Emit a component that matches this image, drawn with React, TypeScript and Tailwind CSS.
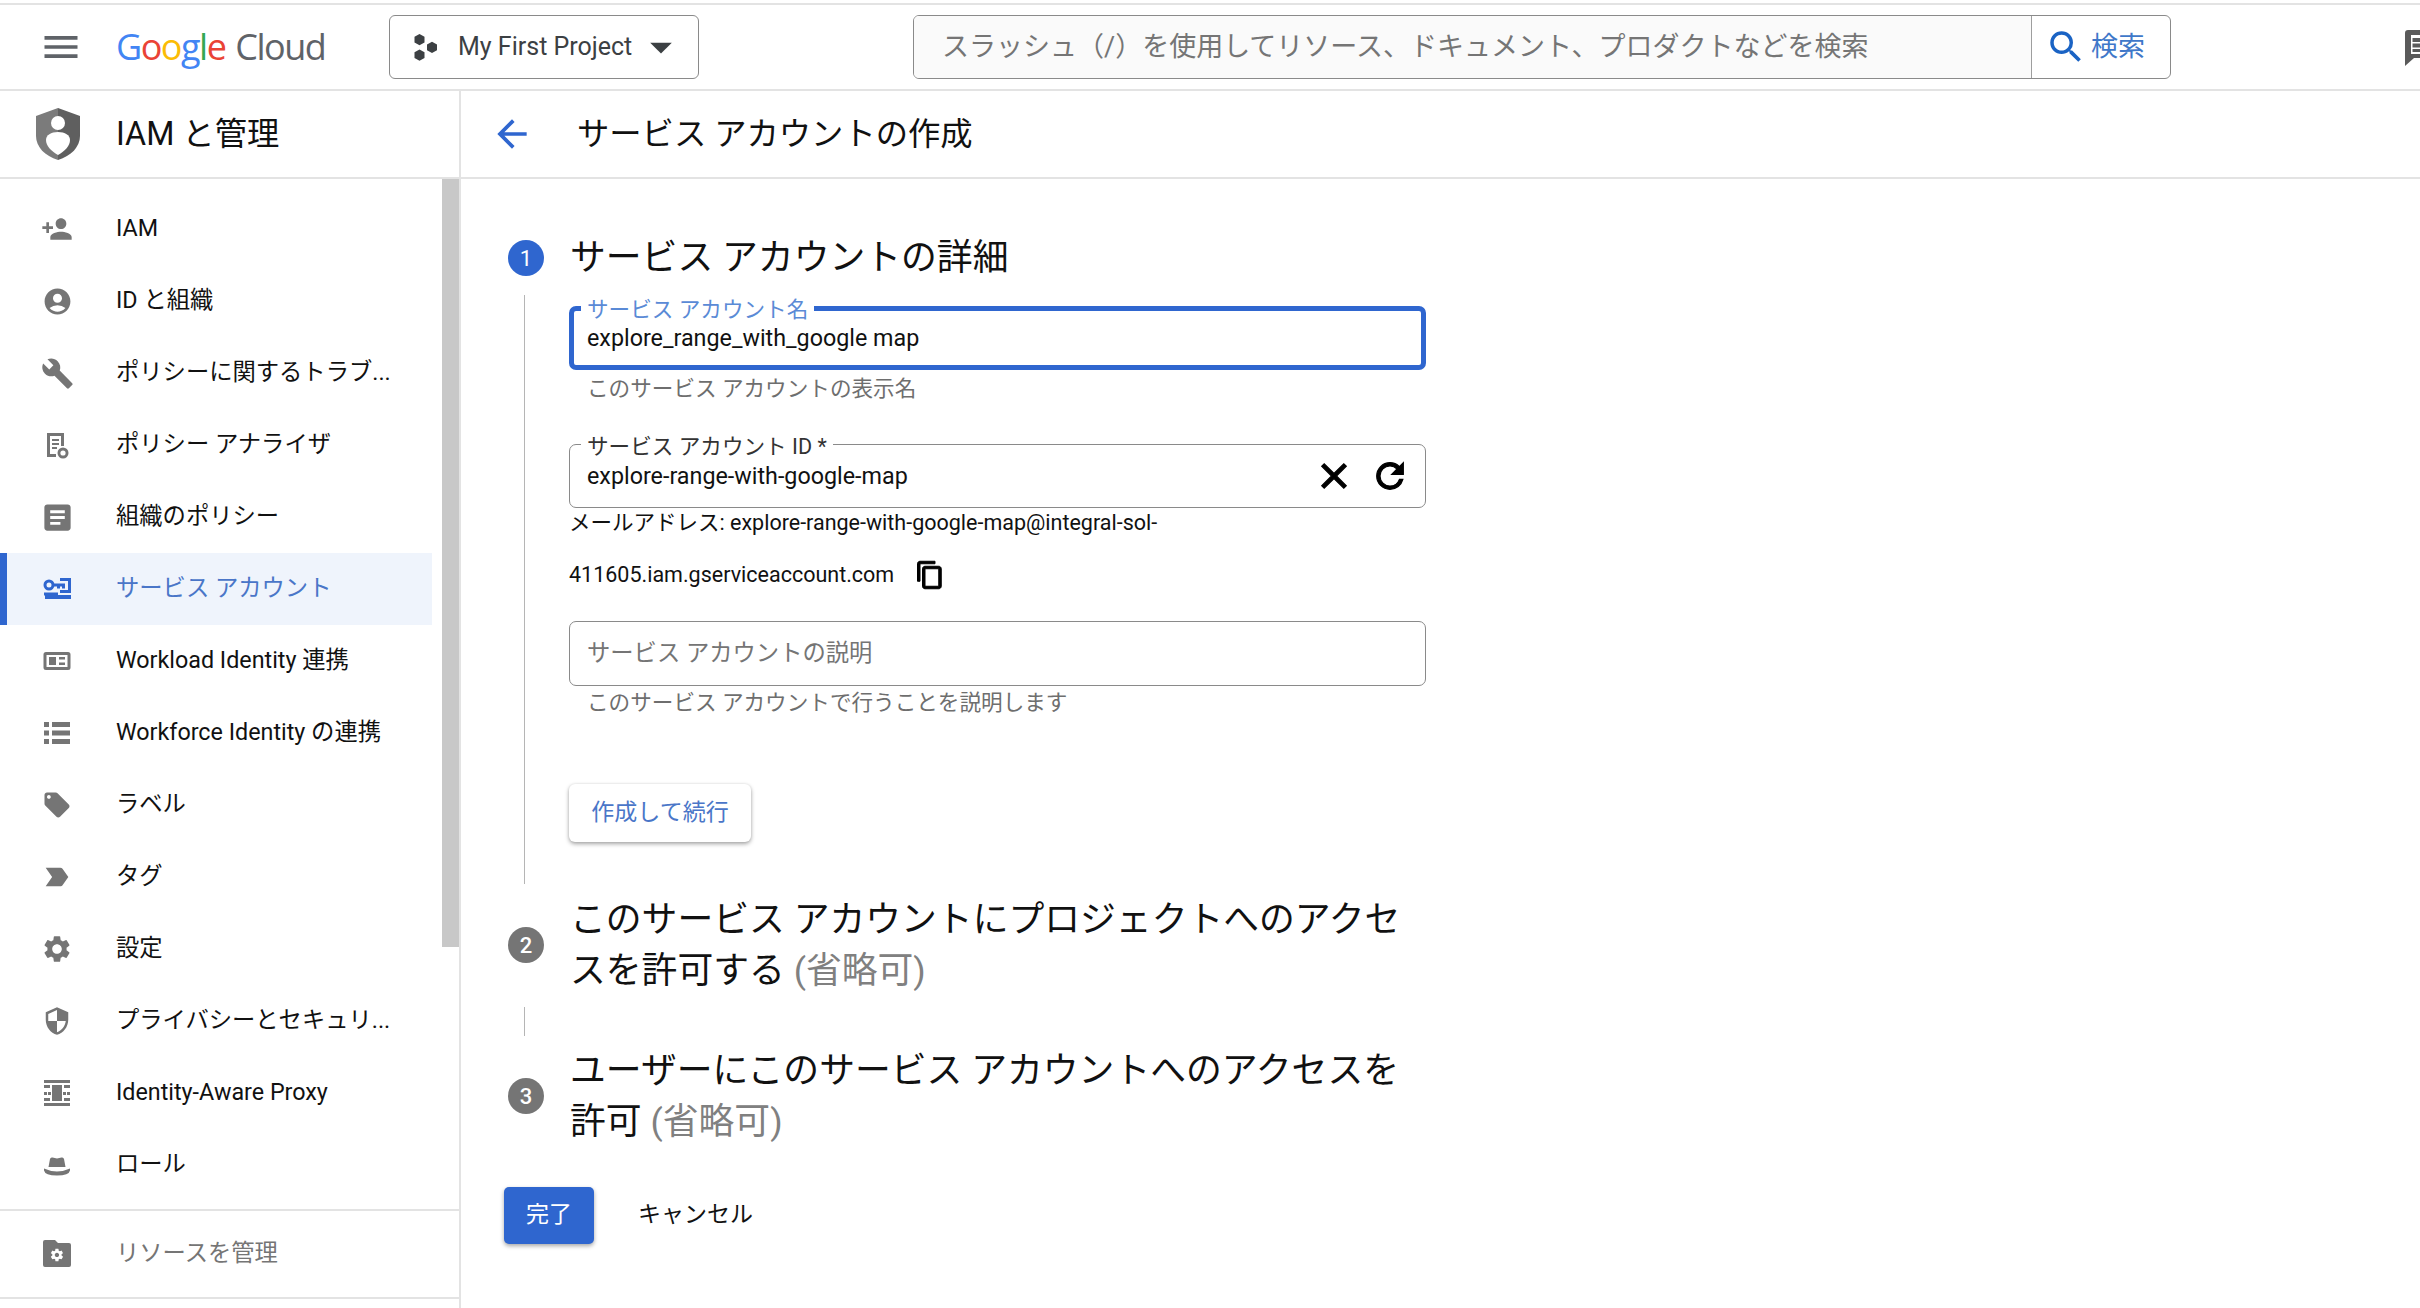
import React from 'react';
import {
  MdMenu, MdArrowDropDown, MdSearch, MdArrowBack, MdPersonAdd, MdAccountCircle, MdBuild, MdArticle,
  MdLocalOffer, MdLabelImportant, MdSettings, MdSecurity,
} from 'react-icons/md';

const font = 'font-["Roboto","Noto_Sans_CJK_JP",sans-serif]';

const PolicyIcon = () => (
  <svg viewBox="0 0 36 36" className="w-[36px] h-[36px]">
    <path d="M8 6h17v13h-3v-10h-11v18h6v3h-9z" fill="#757575" />
    <path d="M13 12h7v2h-7zM13 16h7v2h-7zM13 20h5v2h-5z" fill="#757575" />
    <circle cx="24" cy="26" r="5.500" fill="#757575" />
    <circle cx="24" cy="26" r="2.600" fill="#fff" />
  </svg>
);

const KeyIcon = () => (
  <svg viewBox="0 0 36 36" className="w-[36px] h-[36px]">
    <g transform="translate(0 2)">
      <path d="M21 5h11v15h-11v-3h8v-9h-8z" fill="#2f66cf" />
      <circle cx="10" cy="12" r="4" fill="none" stroke="#2f66cf" strokeWidth="3" />
      <path d="M14 10.500h12v5h-3v-2h-2v2h-3v-2h-4z" fill="#2f66cf" />
      <path d="M6 22h26v4h-26z" fill="#2f66cf" />
      <path d="M5 19.500h14v3h-14z" fill="#2f66cf" />
    </g>
  </svg>
);

const CardIcon = () => (
  <svg viewBox="0 0 36 36" className="w-[36px] h-[36px]">
    <path fillRule="evenodd" d="M7 9h22a2.500 2.500 0 0 1 2.500 2.500v13a2.500 2.500 0 0 1-2.500 2.500h-22a2.500 2.500 0 0 1-2.500-2.500v-13a2.500 2.500 0 0 1 2.500-2.500zM7.500 12v12h21v-12z" fill="#757575" />
    <path d="M10 14h7v8h-7zM20 14h6v2.500h-6zM20 19.500h6v2.500h-6z" fill="#757575" />
  </svg>
);

const ListIcon = () => (
  <svg viewBox="0 0 36 36" className="w-[36px] h-[36px]">
    <path d="M5 7h5v5h-5zM13 7h18v5h-18zM5 15.500h5v5h-5zM13 15.500h18v5h-18zM5 24h5v5h-5zM13 24h18v5h-18z" fill="#757575" />
  </svg>
);

const ProxyIcon = () => (
  <svg viewBox="0 0 36 36" className="w-[36px] h-[36px]">
    <path d="M5 5h26v3h-26zM5 28h26v3h-26zM13 10h10v16h-10z" fill="#757575" />
    <path d="M5 10h6v3h-6zM25 10h6v3h-6zM5 17h3v3h-3zM9 17h3v3h-3zM24 17h3v3h-3zM28 17h3v3h-3zM5 23h6v3h-6zM25 23h6v3h-6z" fill="#757575" />
  </svg>
);

const HatIcon = () => (
  <svg viewBox="0 0 36 36" className="w-[36px] h-[36px]">
    <path d="M9.500 20l1.500-8q.500-2 2.500-1.500l4.500 1 4.500-1q2-.500 2.500 1.500l1.500 8z" fill="#757575" />
    <path d="M5 21.500q13 6 26 0v2q-1 5-13 5t-13-5z" fill="#757575" />
  </svg>
);

const FolderGearIcon = () => (
  <svg viewBox="0 0 36 36" className="w-[36px] h-[36px]">
    <path d="M6 4h10l3 3h11a2 2 0 0 1 2 2v20a2 2 0 0 1-2 2h-24a2 2 0 0 1-2-2v-23a2 2 0 0 1 2-2z" fill="#757575" />
    <g transform="translate(10.500 11.500) scale(0.62)">
      <path d="M19.430 12.980c.040-.320.070-.640.070-.980s-.030-.660-.070-.980l2.110-1.650c.190-.150.240-.420.120-.640l-2-3.460c-.120-.220-.390-.300-.610-.220l-2.490 1c-.520-.400-1.080-.730-1.690-.980l-.380-2.650A.488.488 0 0 0 14 2h-4c-.250 0-.460.180-.490.420l-.380 2.650c-.610.250-1.170.590-1.690.980l-2.490-1c-.230-.090-.490 0-.610.220l-2 3.460c-.130.220-.070.490.120.640l2.110 1.650c-.040.320-.070.650-.070.980s.030.660.070.980l-2.110 1.650c-.190.150-.240.420-.120.640l2 3.460c.120.220.390.300.610.220l2.490-1c.520.400 1.080.730 1.690.980l.380 2.650c.030.240.240.420.490.420h4c.250 0 .460-.180.490-.420l.380-2.650c.610-.250 1.170-.590 1.690-.980l2.490 1c.230.090.490 0 .610-.220l2-3.460c.120-.220.070-.490-.120-.640l-2.110-1.650zM12 15.500c-1.930 0-3.500-1.570-3.500-3.500s1.570-3.500 3.500-3.500 3.500 1.570 3.500 3.500-1.570 3.500-3.500 3.500z" fill="#fff" />
    </g>
  </svg>
);

const CloseIcon = () => (
  <svg viewBox="0 0 24 24" className="w-[42px] h-[42px] ml-auto shrink-0">
    <path d="M19 6.410L17.590 5 12 10.590 6.410 5 5 6.410 10.590 12 5 17.590 6.410 19 12 13.410 17.590 19 19 17.590 13.410 12z" fill="#000" stroke="#000" strokeWidth="0.7" />
  </svg>
);

const RefreshIcon = () => (
  <svg viewBox="0 0 24 24" className="w-[40px] h-[40px] ml-[15px] mr-[15px] shrink-0">
    <path d="M17.650 6.350C16.200 4.900 14.210 4 12 4c-4.420 0-7.990 3.580-7.990 8s3.570 8 7.990 8c3.730 0 6.840-2.550 7.730-6h-2.080c-.820 2.330-3.040 4-5.650 4-3.310 0-6-2.690-6-6s2.690-6 6-6c1.660 0 3.140.690 4.220 1.780L13 11h7V4l-2.350 2.350z" fill="#000" stroke="#000" strokeWidth="0.7" />
  </svg>
);

const CopyIcon = () => (
  <svg viewBox="0 0 24 24" className="w-[30px] h-[30px] ml-[21px] shrink-0">
    <path d="M16 1H4c-1.100 0-2 .900-2 2v14h2V3h12V1zm3 4H8c-1.100 0-2 .900-2 2v14c0 1.100.900 2 2 2h11c1.100 0 2-.900 2-2V7c0-1.100-.900-2-2-2zm0 16H8V7h11v14z" fill="#000" stroke="#000" strokeWidth="0.8" />
  </svg>
);

const navItems: { label: string; icon: React.ReactNode; active?: boolean }[] = [
  { label: 'IAM', icon: <MdPersonAdd size={32} /> },
  { label: 'ID と組織', icon: <MdAccountCircle size={31} /> },
  { label: 'ポリシーに関するトラブ...', icon: <MdBuild size={33} /> },
  { label: 'ポリシー アナライザ', icon: <PolicyIcon /> },
  { label: '組織のポリシー', icon: <MdArticle size={35} /> },
  { label: 'サービス アカウント', icon: <KeyIcon />, active: true },
  { label: 'Workload Identity 連携', icon: <CardIcon /> },
  { label: 'Workforce Identity の連携', icon: <ListIcon /> },
  { label: 'ラベル', icon: <MdLocalOffer size={30} /> },
  { label: 'タグ', icon: <MdLabelImportant size={32} /> },
  { label: '設定', icon: <MdSettings size={32} /> },
  { label: 'プライバシーとセキュリ...', icon: <MdSecurity size={30} /> },
  { label: 'Identity-Aware Proxy', icon: <ProxyIcon /> },
  { label: 'ロール', icon: <HatIcon /> },
];

const StepTitle = ({ n, children }: { n: number; children: React.ReactNode }) => (
  <div className="flex items-center">
    <div className="w-[36px] h-[36px] rounded-full bg-[#757575] text-white text-[22px] font-medium flex items-center justify-center shrink-0">{n}</div>
    <div className="ml-[26px] pt-[2px] text-[35.800px] leading-[51px] text-[#111]">{children}</div>
  </div>
);

export default function App() {
  return (
    <div className={`${font} w-[2420px] h-[1308px] bg-white overflow-hidden flex flex-col text-[#111]`}>
      <div className="h-[5px] border-b-2 border-[#e3e3e3] shrink-0" />

      {/* Top bar */}
      <div className="h-[86px] shrink-0 border-b-2 border-[#e3e3e3] flex items-center pl-[39px]">
        <MdMenu size={44} className="text-[#5f6368] shrink-0" />
        <div className='ml-[33px] w-[208px] shrink-0 font-["Open_Sans",sans-serif] text-[36px] tracking-[-1.5px] whitespace-nowrap'>
          <span className="text-[#4285f4]">G</span>
          <span className="text-[#ea4335]">o</span>
          <span className="text-[#fbbc05]">o</span>
          <span className="text-[#4285f4]">g</span>
          <span className="text-[#34a853]">l</span>
          <span className="text-[#ea4335]">e</span>
          <span className="text-[#5f6368] ml-[10px]">Cloud</span>
        </div>
        <div className="ml-[65px] w-[310px] h-[64px] shrink-0 border-[1.500px] border-[#8a8a8a] rounded-[6px] flex items-center pl-[24px]">
          <svg viewBox="0 0 24 27" className="w-[24px] h-[27px] shrink-0">
            <path d="M5.500 0l5 2.800v5.700l-5 2.800-5-2.800v-5.700zM5.500 15.500l5 2.800v5.700l-5 2.800-5-2.800v-5.700zM18 7.800l5 2.800v5.700l-5 2.800-5-2.800v-5.700z" fill="#3c4043" />
          </svg>
          <span className="ml-[20px] text-[25px] text-[#3c4043] whitespace-nowrap">My First Project</span>
          <MdArrowDropDown size={52} className="text-[#3c4043] ml-[3px] shrink-0" />
        </div>
        <div className="ml-[214px] w-[1258px] h-[64px] shrink-0 border-[1.500px] border-[#8a8a8a] rounded-[6px] flex items-center bg-white overflow-hidden">
          <div className="w-[1118px] h-full flex items-center pl-[28px] text-[27px] text-[#757575] bg-[#fafafa] border-r-[1.500px] border-[#9e9e9e] whitespace-nowrap">スラッシュ（/）を使用してリソース、ドキュメント、プロダクトなどを検索</div>
          <div className="flex-1 flex items-center pl-[13px]">
            <MdSearch size={42} className="text-[#1a63c4] shrink-0" />
            <span className="text-[27px] ml-[4px] text-[#3f78c9]">検索</span>
          </div>
        </div>
        <svg viewBox="0 0 36 36" className="ml-[234px] w-[36px] h-[36px] shrink-0 mt-[2px]">
          <path d="M3 0h33v28h-27l-9 8v-33a3 3 0 0 1 3-3z" fill="#5a5a5a" />
          <path d="M6 5h30v19h-30z" fill="#fff" />
          <path d="M7.500 8h28.500v4h-28.500zM7.500 13.500h28.500v4h-28.500zM7.500 19h28.500v3h-28.500z" fill="#5a5a5a" />
        </svg>
      </div>

      <div className="flex flex-1 min-h-0">
        {/* Sidebar */}
        <aside className="w-[461px] shrink-0 border-r-2 border-[#e3e3e3] flex flex-col">
          <div className="h-[88px] shrink-0 border-b-2 border-[#e3e3e3] flex items-center pl-[36px]">
            <svg viewBox="0 0 44 52" className="w-[44px] h-[52px] shrink-0">
              <path d="M22 0l22 8v20c0 11-9 20-22 24z" fill="#5f5f5f" />
              <path d="M22 0l-22 8v20c0 11 9 20 22 24z" fill="#7b7b7b" />
              <circle cx="22" cy="15" r="7" fill="#fff" />
              <path d="M22 24c7 0 12 3 12 8 0 6-5 11-12 15-7-4-12-9-12-15 0-5 5-8 12-8z" fill="#fff" />
            </svg>
            <span className="ml-[36px] text-[32.300px]">IAM と管理</span>
          </div>
          <div className="flex-1 min-h-0 flex">
            <nav className="w-[442px] shrink-0 pt-[14px] flex flex-col">
              {navItems.map((item) => (
                <div
                  key={item.label}
                  className={`w-[432px] h-[72px] shrink-0 flex items-center pl-[39px] ${item.active ? 'bg-[#eff4fc] relative' : ''}`}
                >
                  {item.active && <div className="absolute left-0 top-0 bottom-0 w-[7px] bg-[#2f66cf]" />}
                  <span className={`w-[36px] h-[36px] shrink-0 flex items-center justify-center ${item.active ? 'text-[#2f66cf]' : 'text-[#757575]'}`}>{item.icon}</span>
                  <span className={`ml-[41px] pb-[1px] text-[23.300px] whitespace-nowrap ${item.active ? 'text-[#4a76c8]' : 'text-[#111]'}`}>{item.label}</span>
                </div>
              ))}
            </nav>
            <div className="w-[17px] h-[768px] bg-[#c8c8c8] shrink-0" />
          </div>
          <div className="h-[90px] shrink-0 border-y-2 border-[#e3e3e3] flex items-center pl-[39px] mb-[9px]">
            <FolderGearIcon />
            <span className="ml-[41px] pb-[2px] text-[23.300px] text-[#757575]">リソースを管理</span>
          </div>
        </aside>

        {/* Main */}
        <main className="flex-1 min-w-0 flex flex-col">
          <div className="h-[88px] shrink-0 border-b-2 border-[#e3e3e3] flex items-center pl-[29px]">
            <MdArrowBack size={44} className="text-[#2f66cf] shrink-0" />
            <span className="ml-[43px] text-[32.300px] whitespace-nowrap">サービス アカウントの作成</span>
          </div>

          <div className="pl-[47px] pt-[57px]">
            {/* Step 1 */}
            <div className="flex items-center h-[44px]">
              <div className="w-[36px] h-[36px] rounded-full bg-[#2f66cf] text-white text-[22px] flex items-center justify-center shrink-0">1</div>
              <div className="ml-[26px] pt-[2px] text-[35.800px] whitespace-nowrap">サービス アカウントの詳細</div>
            </div>
            <div className="ml-[16px] mt-[15px] border-l-[1.500px] border-[#b5b5b5] pl-[44px] pt-[11px] h-[589px] w-[902px]">
              <div className="relative h-[64px] border-[5px] border-[#2f66cf] rounded-[7px] flex items-center pl-[13px]">
                <span className="absolute left-[7px] top-[-13px] bg-white px-[6px] text-[21.600px] leading-[24px] text-[#5a8ad6] whitespace-nowrap">サービス アカウント名</span>
                <span className="text-[23.300px] whitespace-nowrap">explore_range_with_google map</span>
              </div>
              <div className="mt-[4px] h-[30px] pl-[18px] text-[21.600px] leading-[30px] text-[#6e6e6e] whitespace-nowrap">このサービス アカウントの表示名</div>

              <div className="relative mt-[40px] h-[64px] border-[1.500px] border-[#8a8a8a] rounded-[7px] flex items-center pl-[17px]">
                <span className="absolute left-[11px] top-[-10px] bg-white px-[6px] text-[21.600px] leading-[24px] text-[#333] whitespace-nowrap">サービス アカウント ID *</span>
                <span className="text-[23.300px] whitespace-nowrap">explore-range-with-google-map</span>
                <CloseIcon />
                <RefreshIcon />
              </div>
              <div className="h-[30px] text-[21.500px] leading-[30px] whitespace-nowrap">メールアドレス: explore-range-with-google-map@integral-sol-</div>
              <div className="mt-[22px] h-[30px] flex items-center text-[21.500px] whitespace-nowrap">
                <span>411605.iam.gserviceaccount.com</span>
                <CopyIcon />
              </div>

              <div className="mt-[31px] h-[65px] border-[1.500px] border-[#8a8a8a] rounded-[7px] flex items-center pl-[17px] text-[23.300px] text-[#757575] whitespace-nowrap">サービス アカウントの説明</div>
              <div className="mt-[2px] h-[30px] pl-[18px] text-[21.600px] leading-[30px] text-[#6e6e6e] whitespace-nowrap">このサービス アカウントで行うことを説明します</div>

              <div className="mt-[66px] w-[182px] h-[58px] rounded-[6px] bg-white shadow-[0_2px_4px_rgba(0,0,0,0.35),0_0_3px_rgba(0,0,0,0.08)] flex items-center justify-center text-[23px] text-[#4a76c8]">作成して続行</div>
            </div>

            {/* Step 2 */}
            <div className="mt-[9px]">
              <StepTitle n={2}>
                このサービス アカウントにプロジェクトへのアクセ<br />スを許可する <span className="text-[#808080]">(省略可)</span>
              </StepTitle>
            </div>
            <div className="ml-[16px] mt-[10px] h-[29px] border-l-[1.500px] border-[#b5b5b5]" />

            {/* Step 3 */}
            <div className="mt-[8px]">
              <StepTitle n={3}>
                ユーザーにこのサービス アカウントへのアクセスを<br />許可 <span className="text-[#808080]">(省略可)</span>
              </StepTitle>
            </div>

            <div className="ml-[-4px] mt-[39px] flex items-center">
              <div className="w-[90px] h-[57px] rounded-[5px] bg-[#2f66cf] text-white text-[23px] flex items-center justify-center shadow-[0_2px_4px_rgba(0,0,0,0.35)]">完了</div>
              <div className="ml-[44px] text-[23px]">キャンセル</div>
            </div>
          </div>
        </main>
      </div>
    </div>
  );
}
